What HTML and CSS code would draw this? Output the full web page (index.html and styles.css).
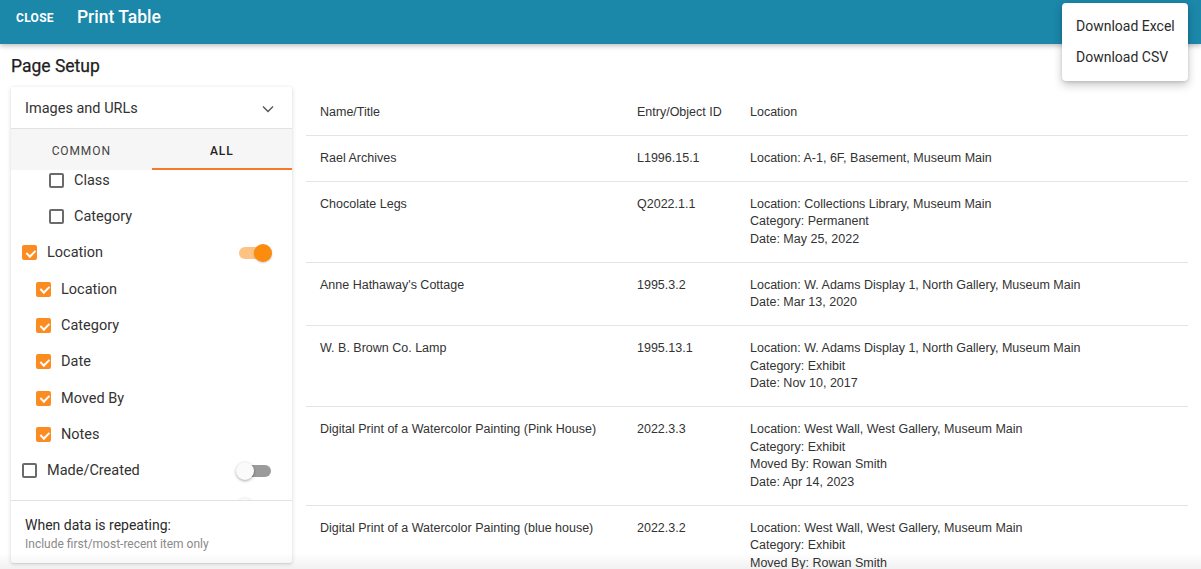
FILE: index.html
```html
<!DOCTYPE html>
<html>
<head>
<meta charset="utf-8">
<link rel="stylesheet" href="styles.css">
</head>
<body>
<header class="topbar">
  <button class="close-btn">CLOSE</button>
  <h1 class="title">Print Table</h1>
</header>

<div class="menu">
  <div class="menu-item">Download Excel</div>
  <div class="menu-item">Download CSV</div>
</div>

<main class="page">
  <h2 class="page-title">Page Setup</h2>

  <aside class="card">
    <div class="select">
      <span>Images and URLs</span>
      <svg class="chev" width="12" height="8" viewBox="0 0 12 8"><path d="M1 1.5 L6 6.5 L11 1.5" fill="none" stroke="#555" stroke-width="1.4"/></svg>
    </div>
    <div class="tabs">
      <div class="tab">COMMON</div>
      <div class="tab active">ALL</div>
    </div>
    <div class="list">
      <div class="list-inner">
        <div class="row lvl2"><span class="cb"></span><span class="lbl">Class</span></div>
        <div class="row lvl2"><span class="cb"></span><span class="lbl">Category</span></div>
        <div class="row lvl0"><span class="cb on"></span><span class="lbl">Location</span><span class="switch on"><span class="thumb"></span></span></div>
        <div class="row lvl1"><span class="cb on"></span><span class="lbl">Location</span></div>
        <div class="row lvl1"><span class="cb on"></span><span class="lbl">Category</span></div>
        <div class="row lvl1"><span class="cb on"></span><span class="lbl">Date</span></div>
        <div class="row lvl1"><span class="cb on"></span><span class="lbl">Moved By</span></div>
        <div class="row lvl1"><span class="cb on"></span><span class="lbl">Notes</span></div>
        <div class="row lvl0"><span class="cb"></span><span class="lbl">Made/Created</span><span class="switch"><span class="thumb"></span></span></div>
        <div class="row lvl0"><span class="cb"></span><span class="lbl">Medium</span><span class="switch"><span class="thumb"></span></span></div>
      </div>
    </div>
    <div class="footer">
      <div class="f-title">When data is repeating:</div>
      <div class="f-sub">Include first/most-recent item only</div>
    </div>
  </aside>

  <section class="table-wrap">
    <table class="tbl">
      <colgroup><col class="c1"><col class="c2"><col></colgroup>
      <thead>
        <tr><th>Name/Title</th><th>Entry/Object ID</th><th>Location</th></tr>
      </thead>
      <tbody>
        <tr><td>Rael Archives</td><td>L1996.15.1</td><td>Location: A-1, 6F, Basement, Museum Main</td></tr>
        <tr><td>Chocolate Legs</td><td>Q2022.1.1</td><td>Location: Collections Library, Museum Main<br>Category: Permanent<br>Date: May 25, 2022</td></tr>
        <tr><td>Anne Hathaway's Cottage</td><td>1995.3.2</td><td>Location: W. Adams Display 1, North Gallery, Museum Main<br>Date: Mar 13, 2020</td></tr>
        <tr><td>W. B. Brown Co. Lamp</td><td>1995.13.1</td><td>Location: W. Adams Display 1, North Gallery, Museum Main<br>Category: Exhibit<br>Date: Nov 10, 2017</td></tr>
        <tr><td>Digital Print of a Watercolor Painting (Pink House)</td><td>2022.3.3</td><td>Location: West Wall, West Gallery, Museum Main<br>Category: Exhibit<br>Moved By: Rowan Smith<br>Date: Apr 14, 2023</td></tr>
        <tr><td>Digital Print of a Watercolor Painting (blue house)</td><td>2022.3.2</td><td>Location: West Wall, West Gallery, Museum Main<br>Category: Exhibit<br>Moved By: Rowan Smith<br>Date: Apr 14, 2023</td></tr>
      </tbody>
    </table>
  </section>
</main>
<div class="bottom-fade"></div>
</body>
</html>
```

FILE: styles.css
```css
* { box-sizing: border-box; }
html, body { margin: 0; padding: 0; height: 100%; overflow: hidden; }
body {
  font-family: Roboto, "Liberation Sans", Arial, sans-serif;
  color: #222;
  background: #fff;
  position: relative;
}

.topbar {
  height: 44px;
  background: #1b87a9;
  display: flex;
  align-items: center;
  padding: 0 0 10px 16px;
  box-shadow: 0 2px 5px rgba(0,0,0,0.25);
  position: relative;
  z-index: 2;
}
.close-btn {
  background: none;
  border: 0;
  padding: 0;
  margin-top: 2px;
  color: #fff;
  font-family: Roboto, sans-serif;
  font-weight: 700;
  font-size: 12px;
  letter-spacing: 0.3px;
  margin-right: 23px;
}
.title {
  margin: 0;
  color: #fff;
  font-size: 17.5px;
  font-weight: 500;
}

.menu {
  position: absolute;
  top: 3px;
  left: 1062px;
  width: 126px;
  background: #fff;
  border-radius: 4px;
  padding: 8px 0;
  box-shadow: 0 4px 10px rgba(0,0,0,0.22), 0 1px 3px rgba(0,0,0,0.12);
  z-index: 5;
}
.menu-item {
  height: 31px;
  line-height: 31px;
  padding-left: 14px;
  font-size: 14px;
  color: #2b2b2b;
}

.page {
  display: grid;
  grid-template-columns: 281px 1fr;
  grid-template-rows: auto 1fr;
  column-gap: 14px;
  padding: 11px 13px 0 11px;
}
.page-title {
  grid-column: 1 / -1;
  margin: 0 0 10px;
  font-size: 17.5px;
  font-weight: 400;
  line-height: 22px;
  color: #1e1e1e;
  -webkit-text-stroke: 0.25px #1e1e1e;
}

.card {
  height: 476px;
  background: #fff;
  box-shadow: 0 1px 4px rgba(0,0,0,0.16), 0 1px 1px rgba(0,0,0,0.06);
  border-radius: 2px;
  display: flex;
  flex-direction: column;
}
.select {
  height: 42px;
  flex: none;
  display: flex;
  align-items: center;
  justify-content: space-between;
  padding: 2px 18px 0 14px;
  border-bottom: 1px solid #e2e2e2;
  font-size: 14.5px;
  color: #333;
}
.chev { margin-top: 1px; }
.tabs {
  height: 41px;
  flex: none;
  display: flex;
  background: #f6f6f6;
}
.tab {
  flex: 1;
  display: flex;
  align-items: center;
  justify-content: center;
  font-size: 12px;
  letter-spacing: 0.9px;
  color: #444;
  border-bottom: 2px solid transparent;
  padding-top: 4px;
}
.tab.active {
  color: #222;
  font-weight: 500;
  border-bottom-color: #f57a2b;
}
.list {
  flex: 1;
  overflow: hidden;
  border-bottom: 1px solid #e2e2e2;
}
.list-inner { margin-top: -8px; }
.row {
  height: 36.35px;
  display: flex;
  align-items: center;
  font-size: 14.5px;
  color: #333;
  padding-right: 21px;
}
.row.lvl0 { padding-left: 11px; }
.row.lvl1 { padding-left: 25px; }
.row.lvl2 { padding-left: 38px; }
.cb {
  width: 15px;
  height: 15px;
  border: 2px solid #6b6b6b;
  border-radius: 2px;
  flex: none;
  position: relative;
  margin-right: 10px;
}
.cb.on {
  background: #fb8c22;
  border-color: #fb8c22;
}
.cb.on::after {
  content: "";
  position: absolute;
  left: 3.5px;
  top: 0.5px;
  width: 3.5px;
  height: 7px;
  border: solid #fff;
  border-width: 0 2px 2px 0;
  transform: rotate(45deg);
}
.lbl { flex: 1; }
.switch {
  width: 32px;
  height: 12px;
  border-radius: 6px;
  background: #9b9b9b;
  position: relative;
  flex: none;
}
.switch .thumb {
  position: absolute;
  top: -3px;
  left: -3px;
  width: 18px;
  height: 18px;
  border-radius: 50%;
  background: #fafafa;
  box-shadow: 0 1px 3px rgba(0,0,0,0.35);
}
.switch.on { background: #fdc383; }
.switch.on .thumb {
  left: auto;
  right: -1px;
  background: #fb8c0e;
  box-shadow: 0 1px 2px rgba(0,0,0,0.2);
}
.footer {
  height: 62px;
  flex: none;
  padding: 15px 14px 0;
}
.f-title {
  font-size: 14px;
  color: #2b2b2b;
  line-height: 18px;
}
.f-sub {
  font-size: 12px;
  color: #8a8a8a;
  line-height: 18px;
  margin-top: 1px;
}

.table-wrap { min-width: 0; }
.tbl {
  width: 100%;
  border-collapse: collapse;
  font-family: "Liberation Sans", Arial, Helvetica, sans-serif;
  font-size: 12.5px;
  color: #333;
}
.tbl col.c1 { width: 317px; }
.tbl col.c2 { width: 113px; }
.tbl th {
  text-align: left;
  font-weight: 400;
  height: 48px;
  padding: 2px 14px 0;
  border-bottom: 1px solid #e4e4e4;
  vertical-align: middle;
}
.tbl td {
  padding: 14px 14px 13.5px;
  line-height: 17.5px;
  vertical-align: top;
  border-bottom: 1px solid #e4e4e4;
}

.bottom-fade {
  position: absolute;
  left: 0;
  right: 0;
  bottom: 0;
  height: 16px;
  background: linear-gradient(to bottom, rgba(0,0,0,0), rgba(0,0,0,0.055));
  pointer-events: none;
}
```
